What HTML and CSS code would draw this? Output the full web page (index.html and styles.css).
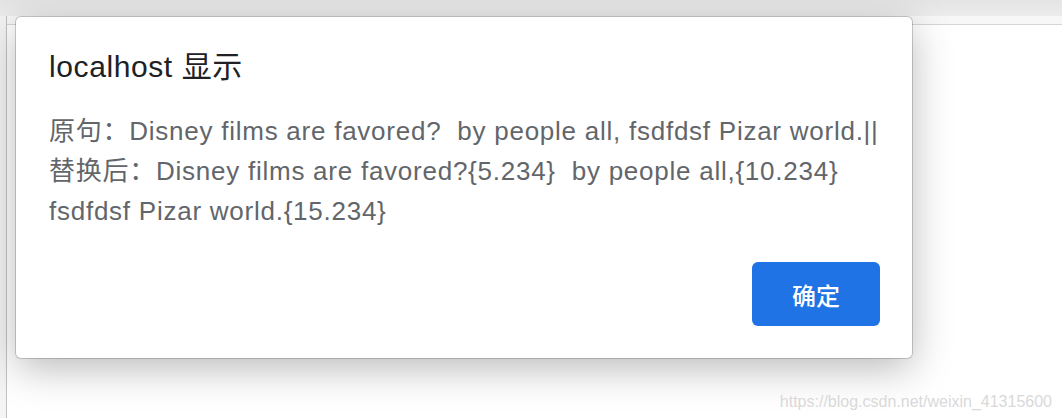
FILE: index.html
```html
<!DOCTYPE html>
<html>
<head>
  <meta charset="UTF-8">
  <link rel="stylesheet" href="styles.css">
</head>
<body>
  <div class="toolbar"></div>
  <div class="page">
    <div class="sidebar"></div>
    <div class="main">
      <div class="subbar"></div>
    </div>
  </div>

  <!-- alert dialog -->
  <div class="dialog">
    <div class="dialog-title">localhost 显示</div>
    <div class="dialog-message">原句：Disney films are favored?  by people all, fsdfdsf Pizar world.||
替换后：Disney films are favored?{5.234}  by people all,{10.234} fsdfdsf Pizar world.{15.234}</div>
    <div class="dialog-buttons">
      <button class="dialog-btn">确定</button>
    </div>
  </div>

  <div class="watermark">https://blog.csdn.net/weixin_41315600</div>
</body>
</html>
```

FILE: styles.css
```css
html, body {
  margin: 0;
  height: 100%;
  overflow: hidden;
  background-color: #ffffff;
}
.toolbar {
  height: 16px;
  background: linear-gradient(to bottom, #e4e4e4, #ececec);
}
.page {
  display: flex;
  height: calc(100% - 16px);
}
.sidebar {
  width: 6px;
  background-color: #f4f4f4;
  border-right: 1px solid #c2c2c2;
}
.main {
  flex: 1;
}
.subbar {
  height: 8px;
  background-color: #f7f7f7;
  border-bottom: 1px solid #d6d6d6;
}

/* Dialog */
.dialog {
  position: absolute;
  left: 16px;
  top: 17px;
  width: 896px;
  box-sizing: border-box;
  padding: 33px 32px 32px 33px;
  background-color: #ffffff;
  border-radius: 5px;
  box-shadow: 0 0 0 1px rgba(0, 0, 0, 0.18), 0 10px 40px rgba(0, 0, 0, 0.28);
  font-family: 'Liberation Sans', 'Noto Sans CJK SC', sans-serif;
}
.dialog-title {
  color: #202124;
  font-size: 30px;
  letter-spacing: 0.6px;
  line-height: 34px;
}
.dialog-message {
  margin-top: 27px;
  color: #62666a;
  font-size: 26px;
  letter-spacing: 0.75px;
  line-height: 40px;
  white-space: pre-wrap;
}
.dialog-buttons {
  display: flex;
  justify-content: flex-end;
  margin-top: 31px;
}
.dialog-btn {
  width: 128px;
  height: 64px;
  border: none;
  border-radius: 6px;
  background-color: #1f73e4;
  color: #ffffff;
  font-family: 'Noto Sans CJK SC', sans-serif;
  font-size: 24px;
  font-weight: 500;
}
.watermark {
  position: absolute;
  right: 10px;
  bottom: 7px;
  color: #d9d9d9;
  font-family: 'Liberation Sans', sans-serif;
  font-size: 16px;
}
```
